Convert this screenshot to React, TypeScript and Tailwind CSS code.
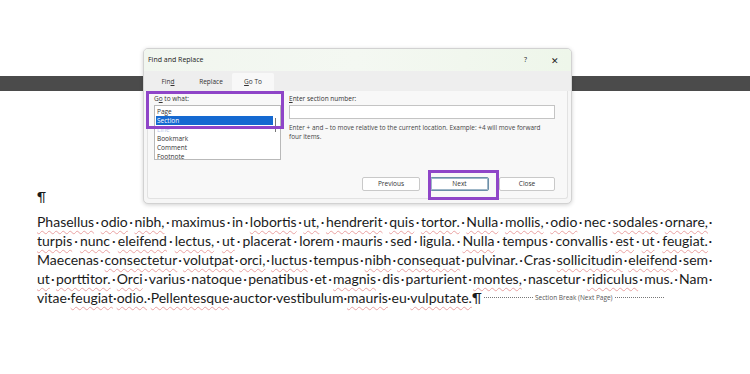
import React from 'react';

type Word = { t: string; u?: boolean };

const w = (s: string): Word[] =>
  s.split(' ').map((tok) => (tok.startsWith('_') ? { t: tok.slice(1), u: true } : { t: tok }));

const lines: Word[][] = [
  w('_Phasellus _odio _nibh, maximus in _lobortis _ut, _hendrerit _quis _tortor. _Nulla _mollis, _odio nec _sodales _ornare,'),
  w('_turpis _nunc _eleifend _lectus, _ut placerat lorem mauris sed ligula. _Nulla tempus convallis _est _ut _feugiat.'),
  w('Maecenas _consectetur _volutpat _orci, _luctus tempus _nibh _consequat pulvinar. Cras _sollicitudin _eleifend sem'),
  w('_ut _porttitor. _Orci varius natoque penatibus et _magnis dis parturient _montes, nascetur _ridiculus mus. Nam'),
];

const lastLine = w('vitae _feugiat _odio. _Pellentesque auctor vestibulum _mauris eu _vulputate.');

function Token({ wd }: { wd: Word }) {
  return (
    <span
      className={
        wd.u ? 'underline decoration-wavy decoration-[#eaa2a2] decoration-[0.5px] underline-offset-[3px]' : ''
      }
    >
      {wd.t}
    </span>
  );
}

function Line({ words, justify, trailing }: { words: Word[]; justify: boolean; trailing?: React.ReactNode }) {
  if (justify) {
    return (
      <div className="flex whitespace-nowrap">
        {words.map((wd, i) => (
          <React.Fragment key={i}>
            <Token wd={wd} />
            <span className={i < words.length - 1 ? 'min-w-[4px] flex-1 text-center' : 'w-[5px] text-center'}>·</span>
          </React.Fragment>
        ))}
      </div>
    );
  }
  return (
    <div className="flex items-center whitespace-nowrap">
      {words.map((wd, i) => (
        <React.Fragment key={i}>
          <Token wd={wd} />
          {i < words.length - 1 ? <span>·</span> : null}
        </React.Fragment>
      ))}
      {trailing}
    </div>
  );
}

function Btn({ label, focus, w }: { label: string; focus?: boolean; w: string }) {
  return (
    <div
      className={`${w} flex h-[14px] items-center justify-center rounded-[2px] border bg-white text-[6.5px] text-[#333] ${
        focus ? 'border-[#6c8fa8] shadow-[inset_0_0_0_1px_#9fb7c8]' : 'border-[#c9c9c9]'
      }`}
    >
      {label}
    </div>
  );
}

function Dialog() {
  const items = ['Page', 'Section', 'Line', 'Bookmark', 'Comment', 'Footnote'];
  return (
    <div className="absolute left-[143px] top-[48px] flex h-[156px] w-[429px] flex-col overflow-hidden rounded-[5px] border border-[#d2d2d2] bg-[#f6f6f6] font-['Open_Sans',sans-serif] text-[#333] shadow-[0_1px_4px_rgba(0,0,0,0.18)]">
      {/* title bar */}
      <div className="flex h-[22px] items-center bg-gradient-to-r from-[#f1f6ef] via-[#f4f8f2] to-[#eef6ea] pl-[4px] pr-[12px] text-[7px] text-[#222]">
        <span>Find and Replace</span>
        <span className="ml-auto mr-[24px] text-[7px]">?</span>
        <span className="text-[9px] leading-none">✕</span>
      </div>
      {/* tabs */}
      <div className="flex h-[20px] items-end bg-[#eeeeee] pl-[9px] text-[6.5px]">
        <div className="flex h-[18px] w-[30px] items-center justify-center">
          Fin<span className="underline">d</span>
        </div>
        <div className="ml-[11px] flex h-[18px] w-[34px] items-center justify-center">Replace</div>
        <div className="ml-[4px] flex h-[18px] w-[42px] items-center justify-center rounded-t-[2px] bg-[#f8f8f8]">
          <span className="underline">G</span>o To
        </div>
      </div>
      {/* panel */}
      <div className="relative flex flex-1 flex-col px-[3px] pb-[4px]">
        <div className="flex flex-1 flex-col rounded-b-[3px] border border-t-0 border-[#e2e2e2] bg-[#f8f8f8] px-[6px] pt-[3px]">
          <div className="flex gap-[8px]">
            <div className="flex w-[127px] flex-col">
              <div className="h-[9px] text-[6.5px] leading-[9px]">
                G<span className="underline">o</span> to what:
              </div>
              <div className="relative mt-[2px] flex h-[55px] flex-col border border-[#b9b9b9] bg-white pl-[1px] pt-[1px] text-[6.5px]">
                {items.map((it) => (
                  <div
                    key={it}
                    className={`h-[9px] w-[117px] pl-[1px] leading-[9px] ${
                      it === 'Section' ? 'bg-[#1569d1] text-white' : ''
                    } ${it === 'Line' ? 'text-[#b9c6ea]' : ''}`}
                  >
                    {it}
                  </div>
                ))}
                <div className="absolute right-[4px] top-[12px] h-[14px] w-[1px] bg-[#777]" />
              </div>
            </div>
            <div className="flex flex-1 flex-col">
              <div className="h-[9px] text-[6.5px] leading-[9px]">
                <span className="underline">E</span>nter section number:
              </div>
              <div className="mt-[2px] h-[14px] w-[266px] border border-[#c4c4c4] bg-white" />
              <div className="mt-[4px] text-[6.4px] leading-[9px] text-[#444]">
                Enter + and – to move relative to the current location. Example: +4 will move forward
                <br />
                four items.
              </div>
            </div>
          </div>
          <div className="mt-auto mb-[7px] flex justify-end gap-[10px] pr-[6px]">
            <Btn label="Previous" w="w-[58px]" />
            <Btn label="Next" focus w="w-[59px]" />
            <Btn label="Close" w="w-[56px]" />
          </div>
        </div>
      </div>
      {/* highlight boxes */}
      <div className="pointer-events-none absolute left-[2px] top-[42px] h-[38px] w-[138px] border-[3px] border-[#8f45c8]" />
      <div className="pointer-events-none absolute left-[284px] top-[121px] h-[30px] w-[71px] border-[3px] border-[#8f45c8]" />
    </div>
  );
}

export default function App() {
  return (
    <div className="relative h-[374px] w-[750px] overflow-hidden bg-white font-['Lato',sans-serif] text-[#1b1b1b]">
      <div className="pt-[76px]">
        <div className="h-[15px] bg-[#4b4b4b]" />
        <div className="px-[37px]">
          <div className="mt-[99px] h-[14px] text-[13px] leading-[14px]">¶</div>
          <div className="mt-[8px] w-[676px] text-[14px] leading-[19px]">
            {lines.map((l, i) => (
              <Line key={i} words={l} justify />
            ))}
            <Line
              words={lastLine}
              justify={false}
              trailing={
                <>
                  <span>¶</span>
                  <span className="ml-[2px] flex w-[180px] items-center gap-[2px]">
                    <span className="h-0 flex-1 border-t border-dotted border-[#777]" />
                    <span className="font-['Open_Sans',sans-serif] text-[6.5px] text-[#555]">Section Break (Next Page)</span>
                    <span className="h-0 flex-1 border-t border-dotted border-[#777]" />
                  </span>
                </>
              }
            />
          </div>
        </div>
      </div>
      <Dialog />
    </div>
  );
}
